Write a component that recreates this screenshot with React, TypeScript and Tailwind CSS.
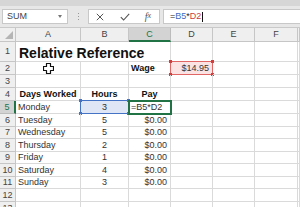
import React from 'react';

const COL_W = ['w-[65px]', 'w-[48px]', 'w-[42px]', 'w-[42px]', 'w-[42px]', 'w-[43px]', 'w-[2px]'];
const LETTERS = ['A', 'B', 'C', 'D', 'E', 'F', ''];

type Align = 'l' | 'c' | 'r';
type CellDef = { t?: React.ReactNode; a?: Align; b?: boolean; over?: 'blue' | 'green' | 'red' };

const alignCls: Record<Align, string> = {
  l: 'justify-start pl-[2px]',
  c: 'justify-center',
  r: 'justify-end pr-[3px]',
};

function Corners({ color }: { color: string }) {
  return (
    <>
      <span className={`absolute -left-[2px] -top-[2px] w-[3px] h-[3px] ${color}`} />
      <span className={`absolute -right-[2px] -top-[2px] w-[3px] h-[3px] ${color}`} />
      <span className={`absolute -left-[2px] -bottom-[2px] w-[3px] h-[3px] ${color}`} />
      <span className={`absolute -right-[2px] -bottom-[2px] w-[3px] h-[3px] ${color}`} />
    </>
  );
}

function Overlay({ kind }: { kind: 'blue' | 'green' | 'red' }) {
  if (kind === 'blue')
    return (
      <div className="absolute -left-px -top-px w-[49px] h-[14px] border border-[#4472c4] bg-[#dfe7f6] bg-[radial-gradient(#b9cbe9_0.6px,transparent_0.7px)] bg-[length:2px_2px]">
        <Corners color="bg-[#4472c4]" />
      </div>
    );
  if (kind === 'green')
    return <div className="absolute -left-px -top-px w-[44px] h-[15px] border-2 border-[#217346] z-10" />;
  return (
    <div className="absolute -left-px -top-px w-[43px] h-[14px] border border-[#e06666] bg-[#fbe3e3]">
      <Corners color="bg-[#d23c3c]" />
    </div>
  );
}

function CursorIcon() {
  return (
    <svg width="11" height="11" viewBox="0 0 11 11">
      <path
        d="M3.5 0.5h4v3h3v4h-3v3h-4v-3h-3v-4h3z"
        fill="#fff"
        stroke="#111"
        strokeWidth="1.2"
        strokeLinejoin="round"
      />
    </svg>
  );
}

const DAYS: [string, string][] = [
  ['Tuesday', '5'],
  ['Wednesday', '5'],
  ['Thursday', '2'],
  ['Friday', '1'],
  ['Saturday', '4'],
  ['Sunday', '3'],
];

const ROWS: { n: number; h: string; cells: CellDef[] }[] = [
  { n: 2, h: 'h-[13px]', cells: [{ t: <CursorIcon />, a: 'c' }, {}, { t: 'Wage', b: true }, { t: '$14.95', a: 'r', over: 'red' }] },
  { n: 3, h: 'h-[13px]', cells: [] },
  { n: 4, h: 'h-[13px]', cells: [{ t: 'Days Worked', a: 'c', b: true }, { t: 'Hours', a: 'c', b: true }, { t: 'Pay', a: 'c', b: true }] },
  { n: 5, h: 'h-[13px]', cells: [{ t: 'Monday' }, { t: '3', a: 'c', over: 'blue' }, { t: '=B5*D2', over: 'green' }] },
  ...DAYS.map(([d, h], i) => ({
    n: 6 + i,
    h: ['h-[13px]', 'h-[12px]', 'h-[13px]', 'h-[12px]', 'h-[13px]', 'h-[12px]'][i],
    cells: [{ t: d }, { t: h, a: 'c' as Align }, { t: '$0.00', a: 'r' as Align }],
  })),
  { n: 12, h: 'h-[13px]', cells: [] },
  { n: 13, h: 'h-[13px]', cells: [] },
];

function Toolbar() {
  return (
    <div className="h-[28px] shrink-0 flex flex-col bg-[#e7e7e7] border-b border-[#c9c9c9]">
      <div className="h-[6px] bg-[#d6d6d6]" />
      <div className="flex items-start pt-[3px]">
        <div className="ml-[2px] w-[66px] h-[15px] bg-white border border-[#c8c8c8] flex items-center justify-between pl-[4px] pr-[5px]">
          <span className="text-[9px] leading-none text-[#444]">SUM</span>
          <span className="w-0 h-0 border-l-[2.5px] border-r-[2.5px] border-t-[3px] border-l-transparent border-r-transparent border-t-[#777]" />
        </div>
        <div className="w-[20px] h-[15px] flex flex-col items-center justify-center gap-[2px]">
          <span className="w-[1px] h-[1px] bg-[#999]" />
          <span className="w-[1px] h-[1px] bg-[#999]" />
          <span className="w-[1px] h-[1px] bg-[#999]" />
        </div>
        <div className="w-[72px] h-[15px] bg-white border border-[#c8c8c8] flex items-center">
          <span className="w-[22px] flex justify-center">
            <svg width="8" height="8" viewBox="0 0 8 8">
              <path d="M0.8 0.8l6.4 6.4M7.2 0.8l-6.4 6.4" stroke="#555" strokeWidth="1" />
            </svg>
          </span>
          <span className="w-[28px] flex justify-center">
            <svg width="10" height="8" viewBox="0 0 10 8">
              <path d="M0.8 4.2l2.8 2.8 5.6-6.2" stroke="#555" strokeWidth="1.1" fill="none" />
            </svg>
          </span>
          <span className="w-[18px] flex justify-center font-['Liberation_Serif',serif] italic text-[10px] leading-none text-[#555]">
            f<span className="text-[8px]">x</span>
          </span>
        </div>
        <div className="ml-[3px] flex-1 h-[15px] bg-white border border-r-0 border-[#c8c8c8] flex items-center pl-[6px] text-[9px] leading-none">
          <span className="text-[#222]">=</span>
          <span className="text-[#3a6bc4]">B5</span>
          <span className="text-[#222]">*</span>
          <span className="text-[#d03b3b]">D2</span>
          <span className="ml-[1px] w-px h-[10px] bg-[#111]" />
        </div>
      </div>
    </div>
  );
}

function HeaderRow() {
  return (
    <div className="flex h-[14px] shrink-0">
      <div className="w-[16px] shrink-0 bg-[#efefef] border-r border-b border-[#c6c6c6] flex items-end justify-end pr-[2px] pb-[2px]">
        <svg width="8" height="8" viewBox="0 0 8 8">
          <path d="M8 0V8H0z" fill="#b5b5b5" />
        </svg>
      </div>
      {LETTERS.map((l, i) =>
        l === 'C' ? (
          <div key={i} className={`${COL_W[i]} shrink-0 bg-[#d3d3d3] border-r border-[#bcbcbc] border-b-2 border-b-[#217346] flex items-center justify-center text-[9px] leading-none text-[#217346]`}>
            {l}
          </div>
        ) : (
          <div key={i} className={`${COL_W[i]} shrink-0 bg-[#efefef] border-r border-b border-[#c6c6c6] flex items-center justify-center text-[9px] leading-none text-[#444]`}>
            {l}
          </div>
        )
      )}
    </div>
  );
}

function RowHead({ n }: { n: number }) {
  if (n === 5)
    return (
      <div className="w-[16px] shrink-0 bg-[#d3d3d3] border-b border-[#bcbcbc] border-r-2 border-r-[#217346] flex items-center justify-center text-[9px] leading-none text-[#217346]">
        {n}
      </div>
    );
  return (
    <div className="w-[16px] shrink-0 bg-[#efefef] border-r border-b border-[#c6c6c6] flex items-center justify-center text-[9px] leading-none text-[#444]">
      {n}
    </div>
  );
}

export default function App() {
  return (
    <div className="w-[300px] h-[207px] overflow-hidden bg-white flex flex-col font-['Liberation_Sans',Arial,sans-serif] text-[#222]">
      <Toolbar />
      <HeaderRow />

      {/* row 1 with the overflowing title */}
      <div className="flex h-[20px] shrink-0">
        <RowHead n={1} />
        <div className={`${COL_W[0]} shrink-0 relative border-b border-[#dadada] flex items-end pl-[3px] pb-px z-10`}>
          <span className="whitespace-nowrap font-bold text-[14px] leading-none text-[#111]">Relative Reference</span>
        </div>
        <div className={`${COL_W[1]} shrink-0 border-b border-[#dadada]`} />
        {COL_W.slice(2).map((w, i) => (
          <div key={i} className={`${w} shrink-0 border-r border-b border-[#dadada]`} />
        ))}
      </div>

      {ROWS.map((r) => (
        <div key={r.n} className={`flex ${r.h} shrink-0`}>
          <RowHead n={r.n} />
          {COL_W.map((w, i) => {
            const c = r.cells[i] || {};
            return (
              <div key={i} className={`${w} shrink-0 relative border-r border-b border-[#dadada]`}>
                {c.over && <Overlay kind={c.over} />}
                <div className={`absolute inset-0 flex items-center ${alignCls[c.a || 'l']} z-20 whitespace-nowrap text-[9px] leading-none ${c.b ? 'font-bold text-[#111]' : 'text-[#333]'}`}>
                  {c.t}
                </div>
              </div>
            );
          })}
        </div>
      ))}
    </div>
  );
}
